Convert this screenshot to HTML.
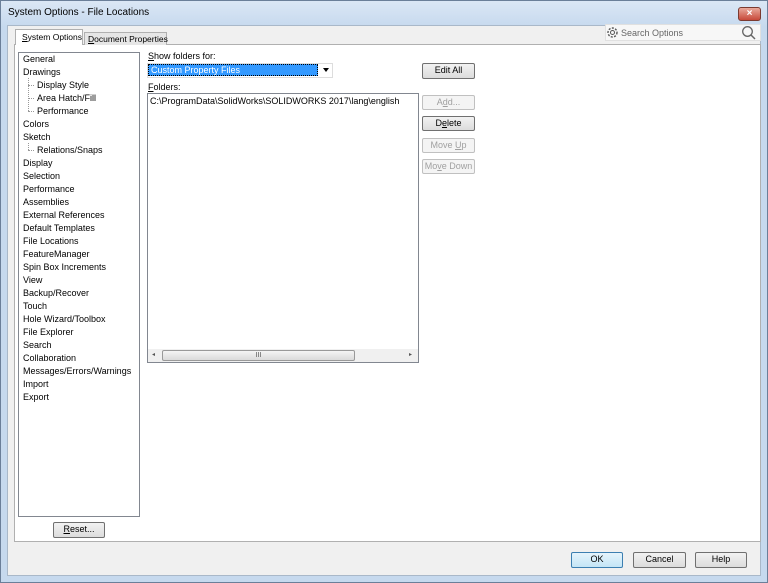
<!DOCTYPE html><html><head><style>
*{box-sizing:border-box;margin:0;padding:0}
body{width:768px;height:583px;overflow:hidden;background:#c3d7ec;font-family:"Liberation Sans",sans-serif;font-size:9px;color:#000;position:relative}
.a{position:absolute;white-space:nowrap}
.btn{position:absolute;border:1px solid #707070;border-radius:2px;background:linear-gradient(#f2f2f2,#dcdcdc);text-align:center;line-height:13px;font-size:9px;white-space:nowrap}
.dis{color:#a0a0a0;border-color:#c0c0c0;background:#f4f4f4}
.tree div{position:absolute;left:4px;white-space:nowrap}
.tree div.s{left:18px}
.ln{position:absolute;border-left:1px dotted #999}
.hl{position:absolute;border-top:1px dotted #999;width:6px}
</style></head><body>
<div class="a" style="left:0;top:0;width:768px;height:583px;border:1px solid #6b7f99;background:linear-gradient(#dbe7f5,#c6d9ee 26px,#c6d9ee)"></div>
<div class="a" style="left:8px;top:7px;font-size:10px;color:#000">System Options - File Locations</div>
<div class="a" style="left:738px;top:7px;width:23px;height:14px;border:1px solid #7a3a30;border-radius:3px;background:linear-gradient(#e9a99b,#c7493a);color:#fff;font-size:10px;line-height:12px;text-align:center;font-weight:bold">×</div>
<div class="a" style="left:7px;top:25px;width:754px;height:551px;background:#f0f0f0;border:1px solid #a9b8c9"></div>
<div class="a" style="left:605px;top:24px;width:156px;height:17px;background:#f7f7f7;border:1px solid #e0e0e0"></div>
<svg class="a" style="left:606px;top:26px" width="13" height="13" viewBox="0 0 13 13"><circle cx="6.5" cy="6.5" r="4.5" fill="none" stroke="#555" stroke-width="1.4" stroke-dasharray="2 1.4"/><circle cx="6.5" cy="6.5" r="2" fill="none" stroke="#555"/></svg>
<div class="a" style="left:621px;top:28px;color:#666">Search Options</div>
<svg class="a" style="left:741px;top:25px" width="16" height="15"><circle cx="6.5" cy="6.5" r="4.8" fill="none" stroke="#666" stroke-width="1.3"/><line x1="10" y1="10" x2="14" y2="14" stroke="#666" stroke-width="1.5"/></svg>
<div class="a" style="left:14px;top:44px;width:747px;height:498px;background:#fff;border:1px solid #b0b0b0"></div>
<div class="a" style="left:15px;top:29px;width:68px;height:16px;background:#fff;border:1px solid #b0b0b0;border-bottom:none;padding:2px 0 0 6px;font-size:8.5px"><u>S</u>ystem Options</div>
<div class="a" style="left:84px;top:32px;width:83px;height:13px;background:#e6e6e6;border:1px solid #b0b0b0;border-bottom:none;padding:1px 0 0 3px;font-size:8.5px"><u>D</u>ocument Properties</div>
<div class="a tree" style="left:18px;top:52px;width:122px;height:465px;border:1px solid #828790;background:#fff">
<div style="top:1px">General</div><div style="top:14px">Drawings</div>
<span class="ln" style="left:9px;top:25px;height:33px"></span>
<span class="hl" style="left:9px;top:32px"></span><span class="hl" style="left:9px;top:45px"></span><span class="hl" style="left:9px;top:58px"></span>
<div class="s" style="top:27px">Display Style</div>
<div class="s" style="top:40px">Area Hatch/Fill</div>
<div class="s" style="top:53px">Performance</div>
<div style="top:66px">Colors</div><div style="top:79px">Sketch</div>
<span class="ln" style="left:9px;top:90px;height:7px"></span><span class="hl" style="left:9px;top:97px"></span>
<div class="s" style="top:92px">Relations/Snaps</div>
<div style="top:105px">Display</div><div style="top:118px">Selection</div><div style="top:131px">Performance</div><div style="top:144px">Assemblies</div><div style="top:157px">External References</div><div style="top:170px">Default Templates</div><div style="top:183px">File Locations</div><div style="top:196px">FeatureManager</div><div style="top:209px">Spin Box Increments</div><div style="top:222px">View</div><div style="top:235px">Backup/Recover</div><div style="top:248px">Touch</div><div style="top:261px">Hole Wizard/Toolbox</div><div style="top:274px">File Explorer</div><div style="top:287px">Search</div><div style="top:300px">Collaboration</div><div style="top:313px">Messages/Errors/Warnings</div><div style="top:326px">Import</div><div style="top:339px">Export</div>
</div>
<div class="btn" style="left:53px;top:522px;width:52px;height:16px"><u>R</u>eset...</div>
<div class="a" style="left:148px;top:51px"><u>S</u>how folders for:</div>
<div class="a" style="left:147px;top:63px;width:186px;height:15px;background:#fff;border:1px solid #ddd"></div>
<div class="a" style="left:148px;top:64px;width:170px;height:12px;background:#3399ff;border:1px dotted #000;color:#fff;padding-left:2px;line-height:10px">Custom Property Files</div>
<div class="a" style="left:323px;top:68px;width:0;height:0;border-left:3.5px solid transparent;border-right:3.5px solid transparent;border-top:4px solid #000"></div>
<div class="a" style="left:148px;top:82px"><u>F</u>olders:</div>
<div class="a" style="left:147px;top:93px;width:272px;height:270px;border:1px solid #828790;background:#fff"></div>
<div class="a" style="left:150px;top:96px">C:\ProgramData\SolidWorks\SOLIDWORKS 2017\lang\english</div>
<div class="a" style="left:148px;top:349px;width:270px;height:13px;background:#f0f0f0"></div>
<div class="a" style="left:162px;top:350px;width:193px;height:11px;border:1px solid #999;border-radius:2px;background:linear-gradient(#f4f4f4,#dadada);text-align:center;font-size:7px;line-height:9px;color:#555">III</div>
<div class="a" style="left:152px;top:351px;font-size:6px;color:#555">◂</div>
<div class="a" style="left:409px;top:351px;font-size:6px;color:#555">▸</div>
<div class="btn" style="left:422px;top:63px;width:53px;height:16px">Edit All</div>
<div class="btn dis" style="left:422px;top:95px;width:53px;height:15px">A<u>d</u>d...</div>
<div class="btn" style="left:422px;top:116px;width:53px;height:15px">D<u>e</u>lete</div>
<div class="btn dis" style="left:422px;top:138px;width:53px;height:15px">Move <u>U</u>p</div>
<div class="btn dis" style="left:422px;top:159px;width:53px;height:15px">Mo<u>v</u>e Down</div>
<div class="btn" style="left:571px;top:552px;width:52px;height:16px;border-color:#3c7fb1;background:linear-gradient(#e5f4fc,#c4e5f6)">OK</div>
<div class="btn" style="left:633px;top:552px;width:53px;height:16px">Cancel</div>
<div class="btn" style="left:695px;top:552px;width:52px;height:16px">Help</div>
</body></html>
